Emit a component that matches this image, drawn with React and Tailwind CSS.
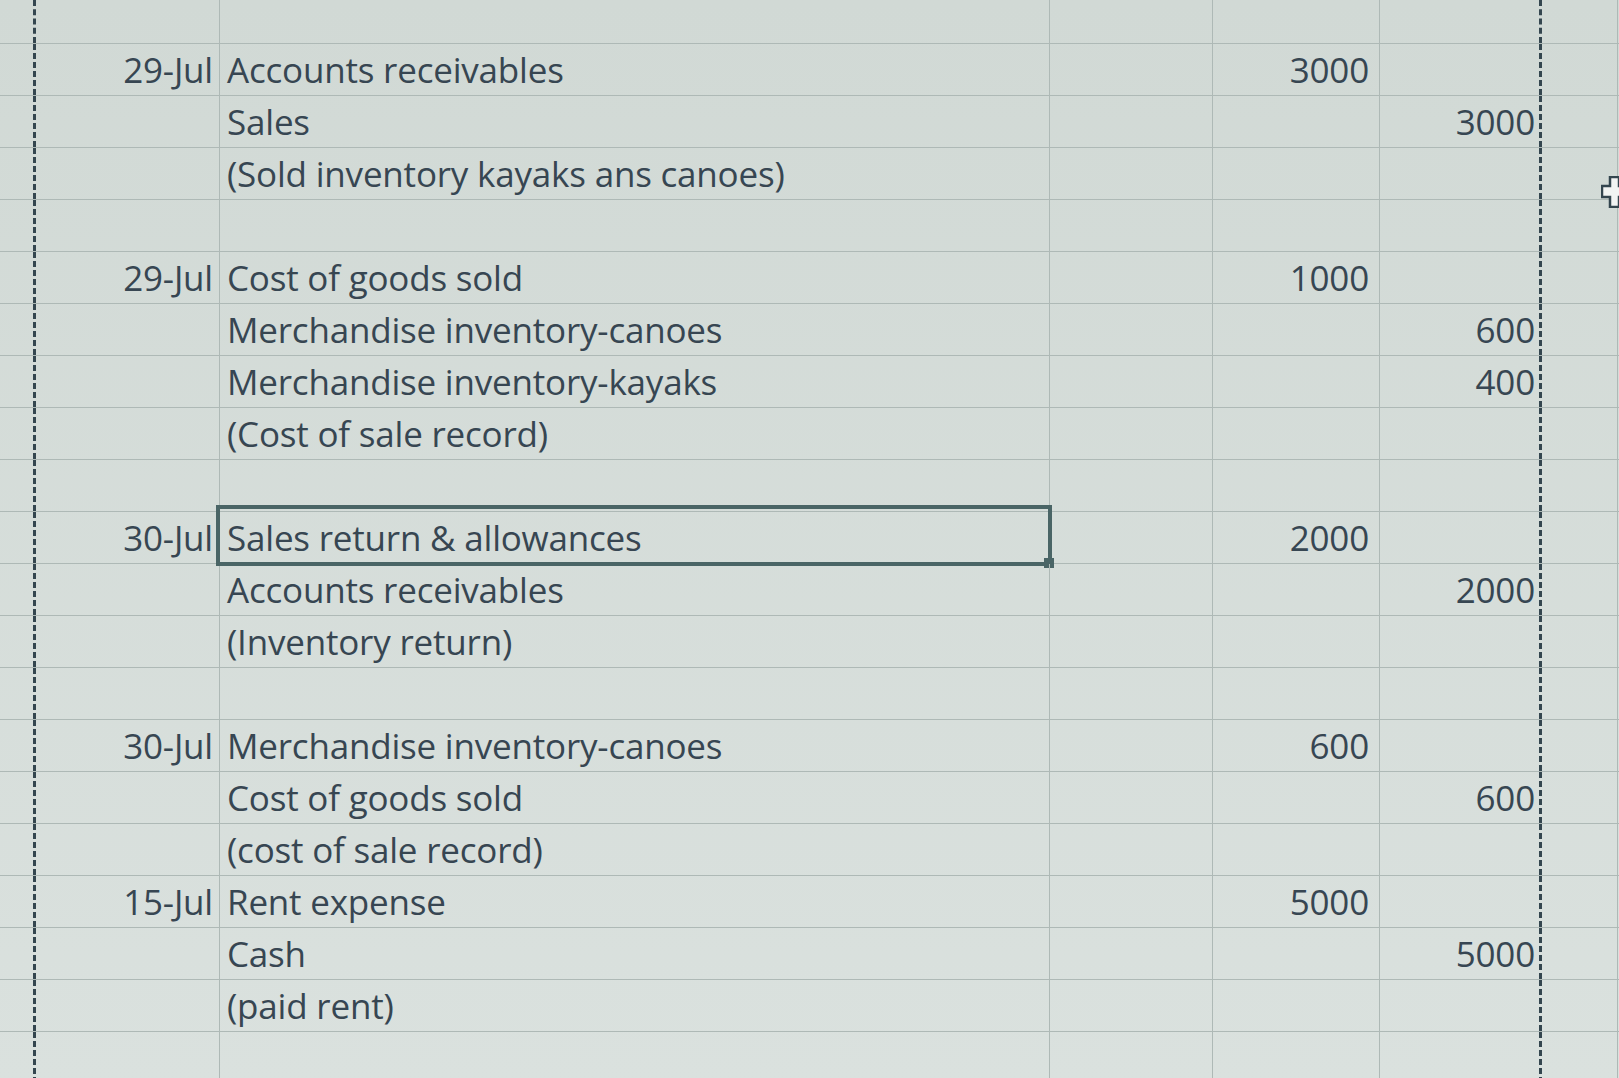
import React from 'react';

const rows = [
  { h: 44 },
  { date: '29-Jul', text: 'Accounts receivables', debit: '3000' },
  { text: 'Sales', credit: '3000' },
  { text: '(Sold inventory kayaks ans canoes)' },
  {},
  { date: '29-Jul', text: 'Cost of goods sold', debit: '1000' },
  { text: 'Merchandise inventory-canoes', credit: '600' },
  { text: 'Merchandise inventory-kayaks', credit: '400' },
  { text: '(Cost of sale record)' },
  {},
  { date: '30-Jul', text: 'Sales return & allowances', debit: '2000', selected: true },
  { text: 'Accounts receivables', credit: '2000' },
  { text: '(Inventory return)' },
  {},
  { date: '30-Jul', text: 'Merchandise inventory-canoes', debit: '600' },
  { text: 'Cost of goods sold', credit: '600' },
  { text: '(cost of sale record)' },
  { date: '15-Jul', text: 'Rent expense', debit: '5000' },
  { text: 'Cash', credit: '5000' },
  { text: '(paid rent)' },
  {},
];

function Row({ date, text, debit, credit, selected, h }) {
  return (
    <div
      className={`grid grid-cols-[36px_184px_830px_163px_167px_162px_76px_1fr] ${h ? 'h-[44px]' : 'h-[52px]'}`}
    >
      <div className="flex justify-end border-b border-[#aeb9b6]">
        <div className="h-full border-r-[3px] border-dashed border-[#34464f]" />
      </div>
      <div className="flex items-center justify-end pr-[6px] border-r border-b border-[#aeb9b6]">
        {date}
      </div>
      <div className="relative flex items-center pl-[7px] border-r border-b border-[#aeb9b6] whitespace-nowrap">
        {text}
        {selected && (
          <div className="absolute -left-[4px] -top-[7px] -right-[3px] -bottom-[3px] border-[4px] border-[#4a6566]">
            <div className="absolute -right-[6px] -bottom-[6px] w-[10px] h-[10px] bg-[#4a6566]" />
          </div>
        )}
      </div>
      <div className="border-r border-b border-[#aeb9b6]" />
      <div className="flex items-center justify-end pr-[10px] border-r border-b border-[#aeb9b6]">
        {debit}
      </div>
      <div className="flex items-center justify-end border-b border-[#aeb9b6]">
        <span className="pr-[4px]">{credit}</span>
        <div className="self-stretch border-r-[3px] border-dashed border-[#34464f]" />
      </div>
      <div className="border-r border-b border-[#aeb9b6]" />
      <div className="border-b border-[#aeb9b6]" />
    </div>
  );
}

export default function App() {
  return (
    <div className="relative w-[1619px] h-[1078px] overflow-hidden bg-gradient-to-b from-[#d1d9d5] to-[#dae1de] text-[#374652] font-['Open_Sans',sans-serif] font-medium text-[35px] leading-none tracking-[-0.2px]">
      {rows.map((r, i) => (
        <Row key={i} {...r} />
      ))}
      <svg className="absolute left-[1601px] top-[176px]" width="28" height="32" viewBox="0 0 28 32">
        <path
          d="M9 1h9v9h9v11h-9v10H9V21H1V10h8z"
          fill="#f2f4f3"
          stroke="#34464f"
          strokeWidth="2.5"
        />
      </svg>
    </div>
  );
}
